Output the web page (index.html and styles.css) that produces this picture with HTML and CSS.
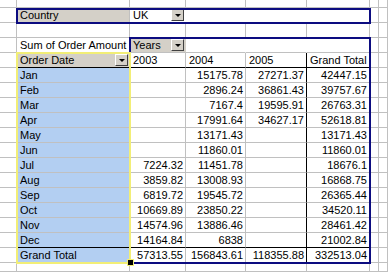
FILE: index.html
```html
<!DOCTYPE html>
<html>
<head>
<meta charset="utf-8">
<link rel="stylesheet" href="styles.css">
</head>
<body>
<div class="sheet">
  <div class="grid">
    <!-- row 0 -->
    <div></div><div></div><div></div><div></div><div></div><div></div><div></div><div></div>
    <!-- page field -->
    <div></div>
    <div class="fld">Country</div>
    <div class="nr ddcell"><span>UK</span><span class="dd"></span></div>
    <div class="nr"></div><div class="nr"></div><div class="nr"></div>
    <div></div><div></div>
    <!-- blank -->
    <div></div><div></div><div></div><div></div><div></div><div></div><div></div><div></div>
    <!-- data field / column field -->
    <div></div>
    <div class="nr">Sum of Order Amount</div>
    <div class="fld nr ddcell"><span>Years</span><span class="dd"></span></div>
    <div class="nr"></div><div class="nr"></div><div class="nr"></div>
    <div></div><div></div>
    <!-- header row -->
    <div></div>
    <div class="fld ddcell bb bx"><span>Order Date</span><span class="dd"></span></div>
    <div class="bb">2003</div>
    <div class="bb">2004</div>
    <div class="bb bx">2005</div>
    <div class="bb">Grand Total</div>
    <div></div><div></div>
    <!-- Jan -->
    <div></div><div class="sel bx">Jan</div><div class="num"></div><div class="num">15175.78</div><div class="num bx">27271.37</div><div class="num">42447.15</div><div></div><div></div>
    <div></div><div class="sel bx">Feb</div><div class="num"></div><div class="num">2896.24</div><div class="num bx">36861.43</div><div class="num">39757.67</div><div></div><div></div>
    <div></div><div class="sel bx">Mar</div><div class="num"></div><div class="num">7167.4</div><div class="num bx">19595.91</div><div class="num">26763.31</div><div></div><div></div>
    <div></div><div class="sel bx">Apr</div><div class="num"></div><div class="num">17991.64</div><div class="num bx">34627.17</div><div class="num">52618.81</div><div></div><div></div>
    <div></div><div class="sel bx">May</div><div class="num"></div><div class="num">13171.43</div><div class="num bx"></div><div class="num">13171.43</div><div></div><div></div>
    <div></div><div class="sel bx">Jun</div><div class="num"></div><div class="num">11860.01</div><div class="num bx"></div><div class="num">11860.01</div><div></div><div></div>
    <div></div><div class="sel bx">Jul</div><div class="num">7224.32</div><div class="num">11451.78</div><div class="num bx"></div><div class="num">18676.1</div><div></div><div></div>
    <div></div><div class="sel bx">Aug</div><div class="num">3859.82</div><div class="num">13008.93</div><div class="num bx"></div><div class="num">16868.75</div><div></div><div></div>
    <div></div><div class="sel bx">Sep</div><div class="num">6819.72</div><div class="num">19545.72</div><div class="num bx"></div><div class="num">26365.44</div><div></div><div></div>
    <div></div><div class="sel bx">Oct</div><div class="num">10669.89</div><div class="num">23850.22</div><div class="num bx"></div><div class="num">34520.11</div><div></div><div></div>
    <div></div><div class="sel bx">Nov</div><div class="num">14574.96</div><div class="num">13886.46</div><div class="num bx"></div><div class="num">28461.42</div><div></div><div></div>
    <div></div><div class="sel bx bb">Dec</div><div class="num bb">14164.84</div><div class="num bb">6838</div><div class="num bx bb"></div><div class="num bb">21002.84</div><div></div><div></div>
    <!-- grand total -->
    <div></div><div class="sel bx">Grand Total</div><div class="num">57313.55</div><div class="num">156843.61</div><div class="num bx">118355.88</div><div class="num">332513.04</div><div></div><div></div>
    <!-- last partial row -->
    <div></div><div></div><div></div><div></div><div></div><div></div><div></div><div></div>
  </div>

  <div class="outline page-box"></div>
  <div class="outline pivot-box"></div>
  <div class="selection"></div>
  <div class="handle"></div>
</div>
</body>
</html>
```

FILE: styles.css
```css
body {
  margin: 0;
  background: #ffffff;
  font-family: "Liberation Sans", Arial, sans-serif;
  font-size: 11px;
  color: #000000;
}

.sheet {
  position: relative;
  width: 388px;
  height: 272px;
  overflow: hidden;
}

.grid {
  display: grid;
  grid-template-columns: 17px 113px 56px 60px 61px 63px 9px 9px;
  grid-template-rows: 8px repeat(17, 15px) 9px;
}

.grid > div {
  box-sizing: border-box;
  border-right: 1px solid #c0c0c0;
  border-bottom: 1px solid #c0c0c0;
  padding: 1px 2px 0 3px;
  line-height: 13px;
  white-space: nowrap;
  overflow: hidden;
}

.grid > div.nr {
  border-right-color: transparent;
}

.grid > div.bx {
  border-right-color: #000000;
}

.grid > div.bb {
  border-bottom-color: #000000;
}

.fld {
  background: #d4d0c8;
}

.sel {
  background: #b3cff2;
}

.num {
  text-align: right;
}

.ddcell {
  display: flex;
  align-items: center;
  justify-content: space-between;
}

.grid > div.ddcell {
  padding-top: 0;
  padding-right: 1px;
}

.dd {
  box-sizing: border-box;
  width: 13px;
  height: 12px;
  background: #d4d0c8;
  border-top: 1px solid #ffffff;
  border-left: 1px solid #ffffff;
  border-right: 1px solid #404040;
  border-bottom: 1px solid #404040;
  display: flex;
  align-items: center;
  justify-content: center;
}

.dd::after {
  content: "";
  width: 0;
  height: 0;
  border-left: 3px solid transparent;
  border-right: 3px solid transparent;
  border-top: 3px solid #000000;
}

.outline {
  position: absolute;
  box-sizing: border-box;
  border: 2px solid #0c0c80;
}

.page-box {
  left: 16px;
  top: 8px;
  width: 355px;
  height: 16px;
}

.pivot-box {
  left: 129px;
  top: 37px;
  width: 242px;
  height: 227px;
}

.selection {
  position: absolute;
  box-sizing: border-box;
  left: 16px;
  top: 52px;
  width: 115px;
  height: 212px;
  border: 2px solid #f2ee76;
}

.handle {
  position: absolute;
  left: 128px;
  top: 260px;
  width: 5px;
  height: 5px;
  background: #000000;
  border: 1px solid #f2ee76;
  box-sizing: content-box;
  margin: -1px 0 0 -1px;
}
```
